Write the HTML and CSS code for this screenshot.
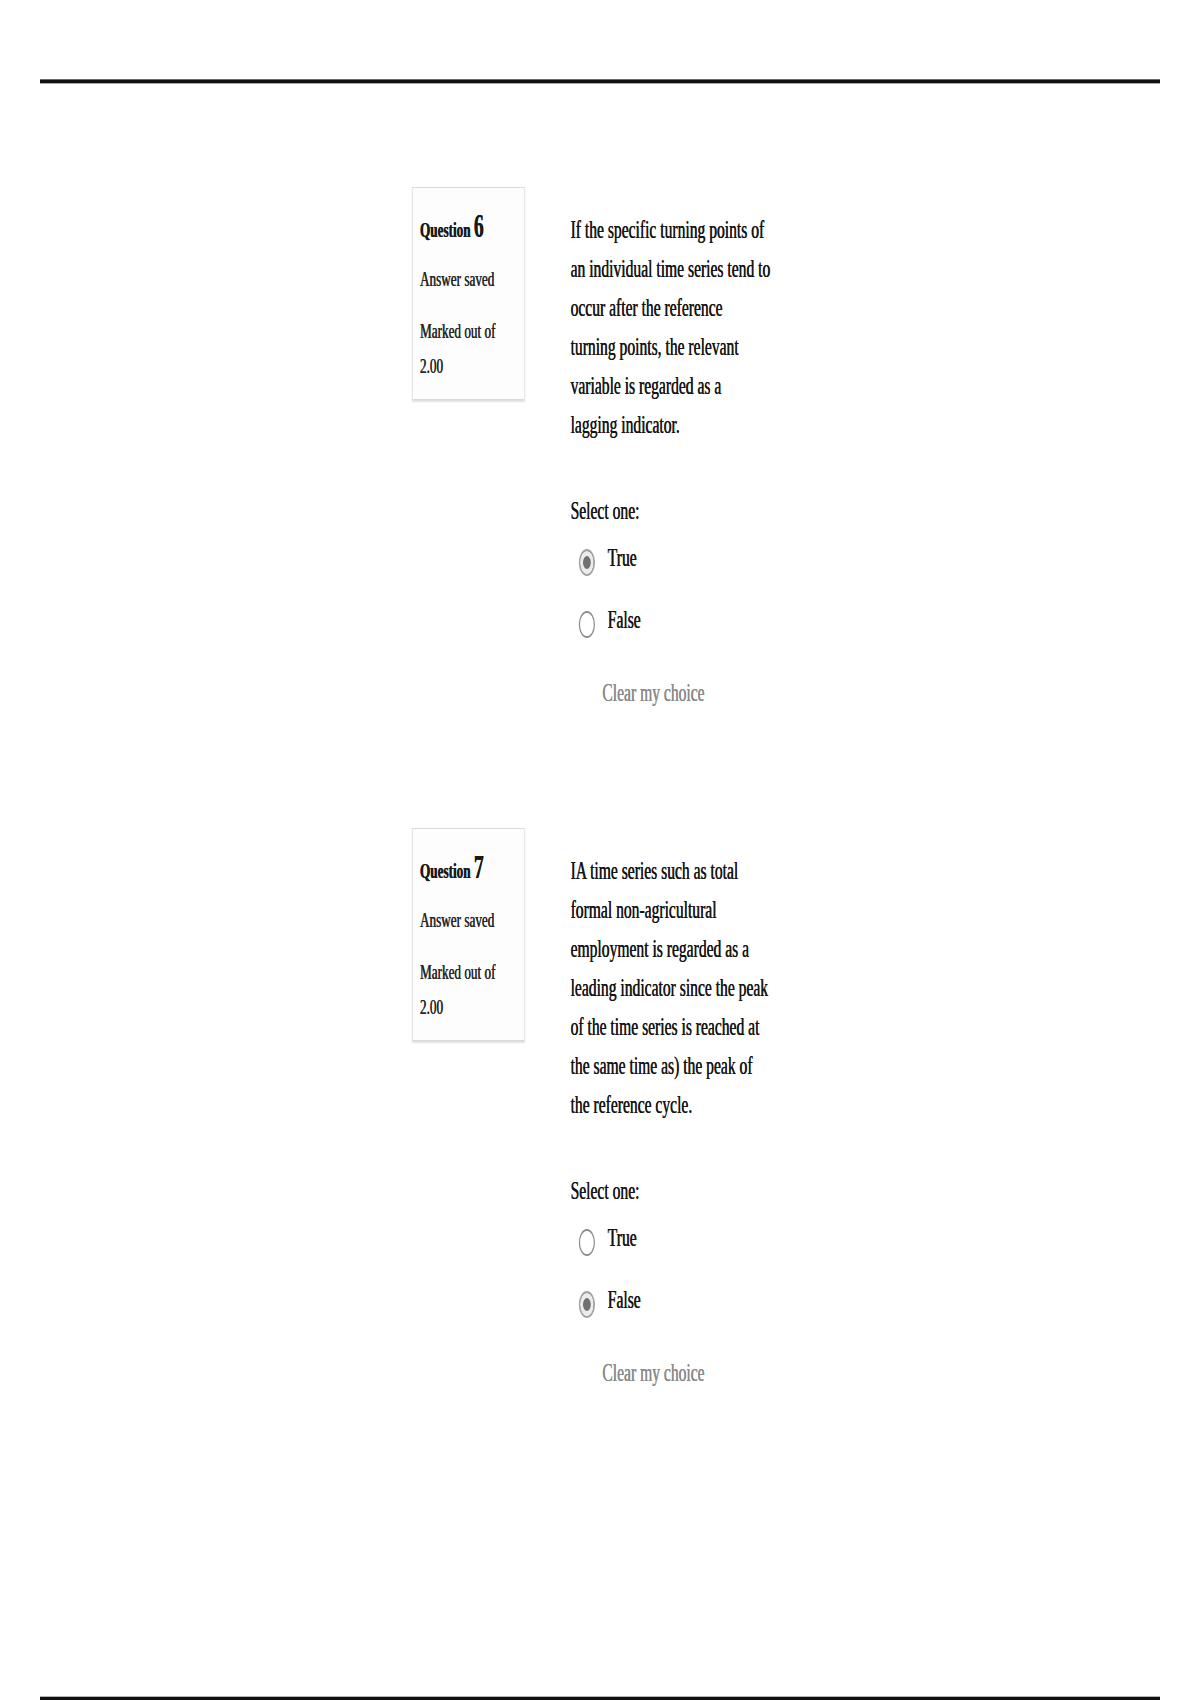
FILE: index.html
```html
<!DOCTYPE html>
<html lang="en">
<head>
<meta charset="utf-8">
<title>Quiz</title>
<link rel="stylesheet" href="styles.css">
</head>
<body>
<div class="page">
  <div class="rule rule-top"></div>

  <div class="question">
    <div class="info">
      <h3 class="qhead">Question <span class="qno">6</span></h3>
      <div class="state">Answer saved</div>
      <div class="grade">Marked out of<br>2.00</div>
    </div>
    <div class="content">
      <div class="qtext">If the specific turning points of<br>an individual time series tend to<br>occur after the reference<br>turning points, the relevant<br>variable is regarded as a<br>lagging indicator.</div>
      <div class="prompt">Select one:</div>
      <div class="answer">
        <div class="option"><span class="radio checked"></span><span class="label">True</span></div>
        <div class="option"><span class="radio"></span><span class="label">False</span></div>
      </div>
      <div class="clear">Clear my choice</div>
    </div>
  </div>

  <div class="question">
    <div class="info">
      <h3 class="qhead">Question <span class="qno">7</span></h3>
      <div class="state">Answer saved</div>
      <div class="grade">Marked out of<br>2.00</div>
    </div>
    <div class="content">
      <div class="qtext">IA time series such as total<br>formal non-agricultural<br>employment is regarded as a<br>leading indicator since the peak<br>of the time series is reached at<br>the same time as) the peak of<br>the reference cycle.</div>
      <div class="prompt">Select one:</div>
      <div class="answer">
        <div class="option"><span class="radio"></span><span class="label">True</span></div>
        <div class="option"><span class="radio checked"></span><span class="label">False</span></div>
      </div>
      <div class="clear">Clear my choice</div>
    </div>
  </div>

  <div class="rule rule-bottom"></div>
</div>
</body>
</html>
```

FILE: styles.css
```css
html, body {
  margin: 0;
  padding: 0;
  background: #ffffff;
}

body {
  font-family: "Liberation Serif", "Times New Roman", serif;
  color: #151515;
}

.page {
  width: 1200px;
  overflow: hidden;
}

.rule {
  height: 3px;
  margin: 0 40px;
  background: #111111;
}

.rule-top {
  margin-top: 79px;
  border-top: 1px solid #6a6a6a;
  border-bottom: 1px solid #a8a8a8;
  margin-bottom: 103px;
}

.rule-bottom {
  margin-top: 304px;
  border-top: 1px solid #b5b5b5;
}

/* The screenshot is horizontally condensed: each question row is drawn
   at its natural width and squeezed horizontally. */
.question {
  display: flex;
  align-items: flex-start;
  width: 660px;
  margin-left: 412px;
  margin-bottom: 116px;
  transform: scaleX(0.6);
  transform-origin: 0 0;
  text-shadow: 0.6px 0 0 currentColor;
}

.info {
  box-sizing: border-box;
  flex: 0 0 188px;
  width: 188px;
  padding: 19px 12px 16px;
  border: 1px solid #dadada;
  background: #fdfdfd;
  box-shadow: 0 2px 2px rgba(0, 0, 0, 0.12);
  color: #262626;
  font-size: 22px;
}

.qhead {
  margin: 0;
  font-size: 22px;
  font-weight: bold;
  line-height: 38px;
  color: #1a1a1a;
}

.qno {
  font-size: 33px;
  font-weight: bold;
  line-height: 38px;
}

.state {
  margin-top: 12px;
  line-height: 35px;
  white-space: nowrap;
}

.grade {
  margin-top: 17px;
  line-height: 35px;
  white-space: nowrap;
}

.content {
  margin-left: 76px;
  margin-top: 23px;
  font-size: 26px;
  line-height: 39px;
  white-space: nowrap;
}

.prompt {
  margin-top: 47px;
}

.answer {
  display: flex;
  flex-direction: column;
  gap: 23px;
  padding-top: 8px;
  margin-left: 14px;
}

.option {
  display: flex;
  align-items: flex-start;
  height: 39px;
}

.radio {
  box-sizing: border-box;
  flex: 0 0 27px;
  width: 27px;
  height: 27px;
  margin-top: 11px;
  border: 2px solid #8c8c8c;
  border-radius: 50%;
  background: #ffffff;
}

.radio.checked {
  border-color: #a3a3a3;
  background: #707070;
  box-shadow: inset 0 0 0 5px #ececec;
}

.label {
  margin-left: 21px;
}

.clear {
  margin-top: 34px;
  margin-left: 53px;
  color: #8a8a8a;
}
```
